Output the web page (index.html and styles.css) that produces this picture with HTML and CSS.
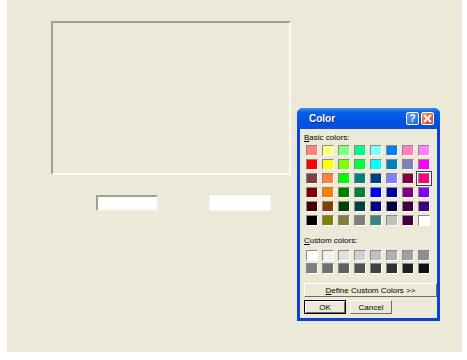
FILE: index.html
```html
<!DOCTYPE html>
<html lang="en">
<head>
    <meta charset="UTF-8">
    <title>Color</title>
    <link rel="stylesheet" href="styles.css">
</head>
<body>
    <main class="desk">
        <div class="group-box"></div>
        <div class="fields">
            <div class="field sunken"></div>
            <div class="field flat"></div>
        </div>

        <section class="dialog">
            <div class="titlebar">
                <span class="title">Color</span>
                <div class="caption-btns">
                    <span class="cap-btn help">?</span>
                    <span class="cap-btn close">
                        <svg width="9" height="9" viewBox="0 0 9 9"><path d="M1 1L8 8M8 1L1 8" stroke="#fff" stroke-width="1.8"/></svg>
                    </span>
                </div>
            </div>
            <div class="dlg-body">
                <p class="label"><u>B</u>asic colors:</p>
                <div class="swatches" id="basic"></div>
                <p class="label custom-label"><u>C</u>ustom colors:</p>
                <div class="swatches custom" id="custom"></div>
                <button class="btn define"><u>D</u>efine Custom Colors &gt;&gt;</button>
                <div class="btn-row">
                    <button class="btn ok">OK</button>
                    <button class="btn">Cancel</button>
                </div>
            </div>
        </section>
    </main>

    <script>
        const basic = [
            '#ff8080','#ffff80','#80ff80','#00ff80','#80ffff','#0080ff','#ff80c0','#ff80ff',
            '#ff0000','#ffff00','#80ff00','#00ff40','#00ffff','#0080c0','#8080c0','#ff00ff',
            '#804040','#ff8040','#00ff00','#008080','#004080','#8080ff','#800040','#ff0080',
            '#800000','#ff8000','#008000','#008040','#0000ff','#0000a0','#800080','#8000ff',
            '#400000','#804000','#004000','#004040','#000080','#000040','#400040','#400080',
            '#000000','#808000','#808040','#808080','#408080','#c0c0c0','#400040','#ffffff'
        ]
        const custom = [
            '#ffffff','#f0f0f0','#e0e0e0','#d0d0d0','#c0c0c0','#b0b0b0','#a0a0a0','#909090',
            '#808080','#707070','#606060','#505050','#404040','#303030','#202020','#101010'
        ]
        const fill = (id, list, selected) => {
            const box = document.getElementById(id)
            list.forEach((c, i) => {
                const s = document.createElement('div')
                s.className = 'swatch' + (i === selected ? ' selected' : '')
                s.style.background = c
                box.appendChild(s)
            })
        }
        fill('basic', basic, 23)
        fill('custom', custom, -1)
    </script>
</body>
</html>
```

FILE: styles.css
```css
*{
    margin: 0;
    padding: 0;
    box-sizing: border-box;
}
body{
    background: #fff;
    font-family: "Liberation Sans", "DejaVu Sans", sans-serif;
}
.desk{
    position: relative;
    margin-left: 7px;
    width: 455px;
    height: 352px;
    background: #ece9d8;
    padding: 21px 0 0 44px;
}
.group-box{
    width: 240px;
    height: 154px;
    border: 2px solid;
    border-color: #a29f8f #fbfaf5 #fbfaf5 #a29f8f;
}
.fields{
    display: flex;
    gap: 51px;
    margin: 20px 0 0 45px;
}
.field{
    width: 62px;
    height: 16px;
    background: #fff;
}
.sunken{
    border: 2px solid;
    border-color: #a29f8f #f4f2ea #f4f2ea #a29f8f;
}
.flat{
    border: 1px solid #f6f5ef;
}

/* color dialog */
.dialog{
    position: absolute;
    left: 290px;
    top: 108px;
    width: 143px;
    height: 213px;
    background: #0842d6;
    border-radius: 6px 6px 0 0;
    padding: 0 3px 3px;
    display: flex;
    flex-direction: column;
}
.titlebar{
    height: 21px;
    margin: 0 -3px;
    border-radius: 6px 6px 0 0;
    background: linear-gradient(#3d8cf3, #0a5fe8 20%, #0054e3 60%, #0a4fd6);
    display: flex;
    align-items: center;
    justify-content: space-between;
    padding: 0 6px 0 12px;
}
.title{
    color: #fff;
    font-weight: bold;
    font-size: 10px;
    text-shadow: 1px 1px #0a2a8a;
}
.caption-btns{
    display: flex;
    gap: 2px;
}
.cap-btn{
    width: 13px;
    height: 13px;
    border: 1px solid #fff;
    border-radius: 2px;
    display: flex;
    align-items: center;
    justify-content: center;
    color: #fff;
    font-weight: bold;
    font-size: 10px;
}
.help{
    background: linear-gradient(135deg, #5a9bff, #2463e0);
}
.close{
    background: linear-gradient(135deg, #f0906a, #d8442a);
}
.dlg-body{
    flex: 1;
    background: #ece9d8;
    padding: 3px 3px 0 4px;
    font-size: 8px;
    color: #000;
}
.label{
    height: 12px;
    line-height: 12px;
}
.swatches{
    display: grid;
    grid-template-columns: repeat(8, 12px);
    grid-auto-rows: 11px;
    column-gap: 4px;
    row-gap: 3px;
    margin: 1px 0 0 2px;
}
.custom{
    row-gap: 2px;
    margin-top: 3px;
}
.custom-label{
    margin-top: 9px;
}
.swatch{
    border: 1px solid;
    border-color: #8c8a7e #fff #fff #8c8a7e;
}
.selected{
    outline: 1px solid #404040;
    outline-offset: 1px;
    box-shadow: 0 0 0 1px #fff;
}
.btn{
    font-family: "Liberation Sans", "DejaVu Sans", sans-serif;
    font-size: 8px;
    background: #ece9d8;
    color: #000;
    border: 1px solid;
    border-color: #fff #716f64 #716f64 #fff;
    height: 14px;
}
.define{
    display: block;
    width: 133px;
    margin-top: 9px;
}
.btn-row{
    display: flex;
    gap: 4px;
    margin-top: 3px;
}
.btn-row .btn{
    width: 42px;
}
.ok{
    border-color: #000;
    box-shadow: inset 1px 1px #fff, inset -1px -1px #716f64;
}
```
